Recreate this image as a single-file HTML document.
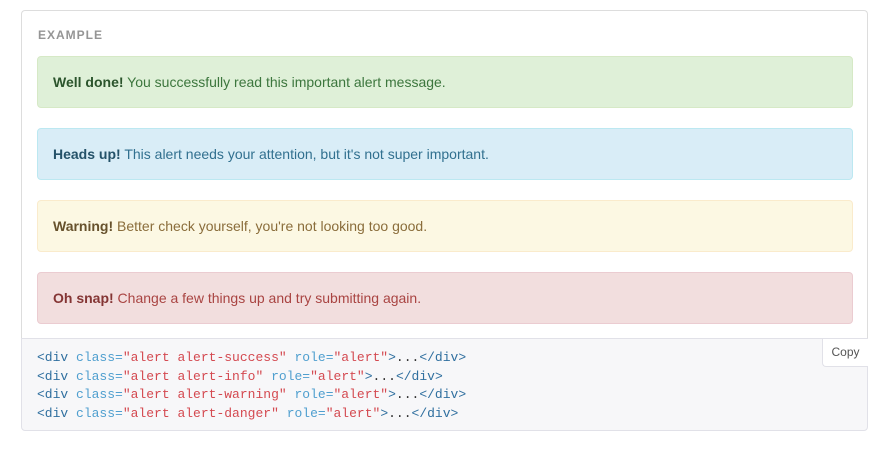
<!DOCTYPE html>
<html><head><meta charset="utf-8"><style>
body{margin:0;background:#fff;font-family:"Liberation Sans",Helvetica,Arial,sans-serif;font-size:14px;}
.ex{position:absolute;left:21px;top:10px;width:845px;height:328px;border:1px solid #ddd;border-bottom:none;border-radius:4px 4px 0 0;}
.lbl{position:absolute;left:16px;top:17px;font-size:12px;font-weight:bold;letter-spacing:1px;color:#959595;}
.al{position:absolute;left:15px;width:816px;height:52px;border:1px solid;border-radius:4px;line-height:50px;padding-left:15px;box-sizing:border-box;}
.al b{font-weight:bold}
.s{top:45px;background:#dff0d8;border-color:#d6e9c6;color:#3c763d}
.s b{color:#2b542c}
.i{top:117px;background:#d9edf7;border-color:#bce8f1;color:#31708f}
.i b{color:#245269}
.w{top:189px;background:#fcf8e3;border-color:#faebcc;color:#8a6d3b}
.w b{color:#66512c}
.d{top:261px;background:#f2dede;border-color:#ebccd1;color:#a94442}
.d b{color:#843534}
.code{position:absolute;left:21px;top:338px;width:845px;height:91px;border:1px solid #e1e1e8;border-radius:0 0 4px 4px;background:#f7f7f9;}
pre{margin:0;position:absolute;left:15px;top:10px;font-family:"Liberation Mono",Menlo,monospace;font-size:13px;line-height:18.5px;color:#333;}
.t{color:#2f6f9f}.a{color:#4f9fcf}.v{color:#d44950}
.copy{position:absolute;left:800px;top:0;width:45px;height:27px;background:#fff;border:1px solid #e1e1e8;border-top:none;border-right:none;border-radius:0 0 0 4px;font-size:12px;color:#555;text-align:center;line-height:27px;}
</style></head><body>
<div class="ex">
<div class="lbl">EXAMPLE</div>
<div class="al s"><b>Well done!</b> You successfully read this important alert message.</div>
<div class="al i"><b>Heads up!</b> This alert needs your attention, but it's not super important.</div>
<div class="al w"><b>Warning!</b> Better check yourself, you're not looking too good.</div>
<div class="al d"><b>Oh snap!</b> Change a few things up and try submitting again.</div>
</div>
<div class="code">
<div class="copy">Copy</div>
<pre><span class="t">&lt;div</span> <span class="a">class=</span><span class="v">"alert alert-success"</span> <span class="a">role=</span><span class="v">"alert"</span><span class="t">&gt;</span>...<span class="t">&lt;/div&gt;</span>
<span class="t">&lt;div</span> <span class="a">class=</span><span class="v">"alert alert-info"</span> <span class="a">role=</span><span class="v">"alert"</span><span class="t">&gt;</span>...<span class="t">&lt;/div&gt;</span>
<span class="t">&lt;div</span> <span class="a">class=</span><span class="v">"alert alert-warning"</span> <span class="a">role=</span><span class="v">"alert"</span><span class="t">&gt;</span>...<span class="t">&lt;/div&gt;</span>
<span class="t">&lt;div</span> <span class="a">class=</span><span class="v">"alert alert-danger"</span> <span class="a">role=</span><span class="v">"alert"</span><span class="t">&gt;</span>...<span class="t">&lt;/div&gt;</span></pre>
</div>
</body></html>
